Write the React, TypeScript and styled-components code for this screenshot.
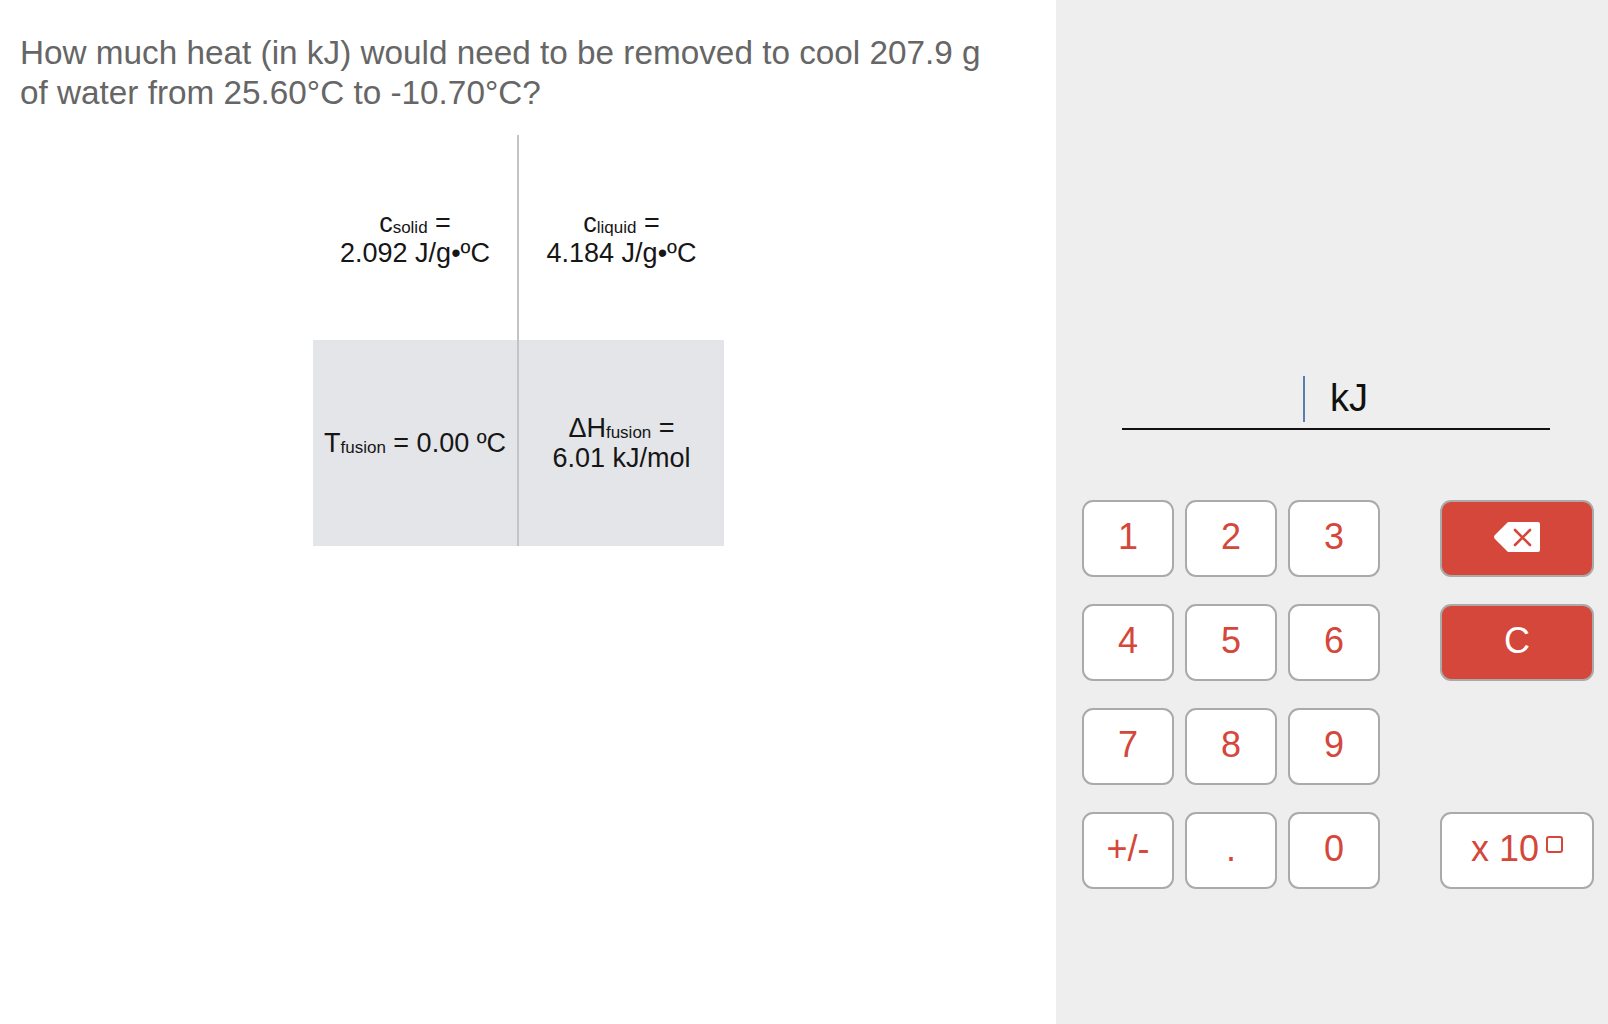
import React from 'react'
import styled, { createGlobalStyle } from 'styled-components'

const GlobalStyle = createGlobalStyle`
  html, body { margin: 0; padding: 0; }
  body {
    font-family: "Liberation Sans", Arial, Helvetica, sans-serif;
    background: #ffffff;
  }
`

const RED = '#d4473a'

const Page = styled.div`
  display: flex;
  min-height: 1024px;
`

const QuestionPane = styled.div`
  width: 1056px;
  flex-shrink: 0;
  box-sizing: border-box;
  padding: 33px 0 0 20px;
  background: #ffffff;
`

const Question = styled.p`
  margin: 0;
  width: 980px;
  font-size: 33.3px;
  line-height: 40px;
  color: #666666;
`

const DataTable = styled.div`
  display: grid;
  grid-template-columns: 206px 205px;
  grid-template-rows: 205px 206px;
  margin: 22px 0 0 293px;
`

const Cell = styled.div<{ $shaded?: boolean; $divider?: boolean }>`
  display: flex;
  flex-direction: column;
  align-items: center;
  justify-content: center;
  box-sizing: border-box;
  background: ${p => (p.$shaded ? '#e4e5e8' : 'transparent')};
  border-right: ${p => (p.$divider ? '2px solid #c4c4c4' : 'none')};
  font-size: 27px;
  line-height: 30px;
  color: #161616;
  text-align: center;
  white-space: nowrap;
`

const Sub = styled.sub`
  font-size: 17px;
  line-height: 0;
  vertical-align: -1px;
`

const KeypadPane = styled.div`
  flex: 1;
  box-sizing: border-box;
  padding-top: 376px;
  background: #eeeeee;
`

const AnswerRow = styled.div`
  display: flex;
  align-items: flex-end;
  width: 428px;
  margin-left: 66px;
  border-bottom: 2px solid #111111;
`

const AnswerField = styled.div`
  display: flex;
  justify-content: flex-end;
  width: 196px;
  box-sizing: border-box;
  padding: 0 13px 6px 0;
`

const Caret = styled.div`
  width: 2px;
  height: 46px;
  background: #5a7eb0;
`

const Unit = styled.div`
  margin-left: 12px;
  padding-bottom: 11px;
  font-size: 38px;
  line-height: 38px;
  color: #111111;
`

const Keypad = styled.div`
  display: flex;
  gap: 60px;
  margin: 70px 0 0 26px;
`

const NumGrid = styled.div`
  display: grid;
  grid-template-columns: repeat(3, 92px);
  grid-auto-rows: 77px;
  gap: 27px 11px;
`

const SideGrid = styled.div`
  display: grid;
  grid-template-columns: 154px;
  grid-template-rows: repeat(4, 77px);
  row-gap: 27px;
`

const Key = styled.button<{ $accent?: boolean; $row?: number }>`
  display: flex;
  align-items: center;
  justify-content: center;
  box-sizing: border-box;
  padding: 0 0 3px;
  border: 2px solid #aaaaaa;
  border-radius: 11px;
  background: ${p => (p.$accent ? RED : '#ffffff')};
  color: ${p => (p.$accent ? '#ffffff' : RED)};
  font-family: inherit;
  font-size: 36px;
  grid-row: ${p => p.$row ?? 'auto'};
  cursor: pointer;
`

const Exponent = styled.span`
  display: inline-block;
  width: 17px;
  height: 17px;
  box-sizing: border-box;
  margin-left: 7px;
  border: 2px solid ${RED};
  border-radius: 3px;
  vertical-align: 8px;
`

const BackspaceIcon = () => (
  <svg width="46" height="30" viewBox="0 0 46 30">
    <path d="M14 0 H44 a2 2 0 0 1 2 2 V28 a2 2 0 0 1 -2 2 H14 L1.2 17.2 a3 3 0 0 1 0 -4.4 Z" fill="#ffffff" />
    <path d="M21 8 L36 23 M36 8 L21 23" stroke={RED} strokeWidth="2.6" strokeLinecap="round" />
  </svg>
)

const digits = ['1', '2', '3', '4', '5', '6', '7', '8', '9', '+/-', '.', '0']

export default function App() {
  return (
    <>
      <GlobalStyle />
      <Page>
        <QuestionPane>
          <Question>
            How much heat (in kJ) would need to be removed to cool 207.9 g of water from 25.60°C to -10.70°C?
          </Question>
          <DataTable>
            <Cell $divider>
              <div>c<Sub>solid</Sub> =</div>
              <div>2.092 J/g•ºC</div>
            </Cell>
            <Cell>
              <div>c<Sub>liquid</Sub> =</div>
              <div>4.184 J/g•ºC</div>
            </Cell>
            <Cell $shaded $divider>
              <div>T<Sub>fusion</Sub> = 0.00 ºC</div>
            </Cell>
            <Cell $shaded>
              <div>ΔH<Sub>fusion</Sub> =</div>
              <div>6.01 kJ/mol</div>
            </Cell>
          </DataTable>
        </QuestionPane>
        <KeypadPane>
          <AnswerRow>
            <AnswerField>
              <Caret />
            </AnswerField>
            <Unit>kJ</Unit>
          </AnswerRow>
          <Keypad>
            <NumGrid>
              {digits.map(d => (
                <Key key={d}>{d}</Key>
              ))}
            </NumGrid>
            <SideGrid>
              <Key $accent $row={1} aria-label="backspace">
                <BackspaceIcon />
              </Key>
              <Key $accent $row={2}>C</Key>
              <Key $row={4}>
                <span>x 10<Exponent /></span>
              </Key>
            </SideGrid>
          </Keypad>
        </KeypadPane>
      </Page>
    </>
  )
}
